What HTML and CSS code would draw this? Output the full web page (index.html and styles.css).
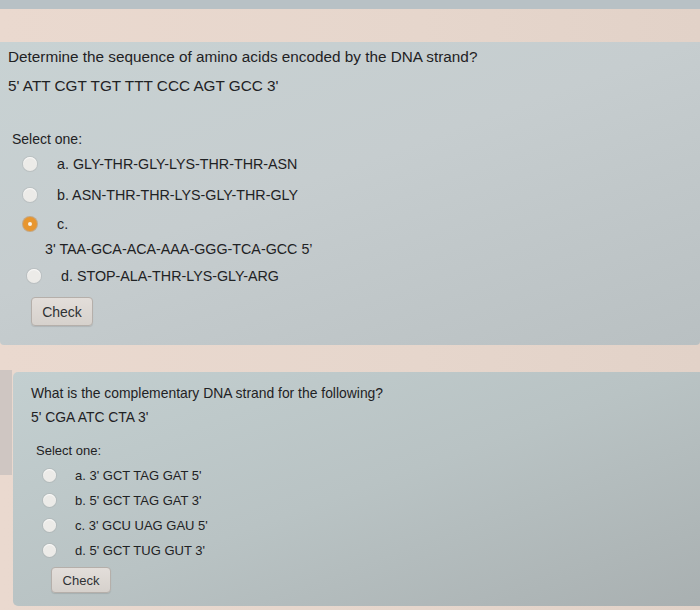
FILE: index.html
```html
<!DOCTYPE html>
<html lang="en">
<head>
    <meta charset="UTF-8">
    <meta name="viewport" content="width=device-width, initial-scale=1.0">
    <title>Quiz</title>
    <link rel="stylesheet" href="styles.css">
</head>
<body>
    <div class="topbar"></div>
    <div class="strip"></div>

    <div class="que first">
        <div class="qtext">
            <p>Determine the sequence of amino acids encoded by the DNA strand?</p>
            <p>5' ATT CGT TGT TTT CCC AGT GCC 3'</p>
        </div>
        <div class="prompt">Select one:</div>
        <div class="answer">
            <label class="opt"><span class="radio"></span><span class="lbl">a. GLY-THR-GLY-LYS-THR-THR-ASN</span></label>
            <label class="opt"><span class="radio"></span><span class="lbl">b. ASN-THR-THR-LYS-GLY-THR-GLY</span></label>
            <label class="opt multi"><span class="radio checked"></span><span class="lbl">c.<span class="wrap">3' TAA-GCA-ACA-AAA-GGG-TCA-GCC 5’</span></span></label>
            <label class="opt last"><span class="radio"></span><span class="lbl">d. STOP-ALA-THR-LYS-GLY-ARG</span></label>
        </div>
        <button class="check">Check</button>
    </div>

    <div class="gap"></div>

    <div class="row">
        <div class="info"></div>
        <div class="que second">
            <div class="qtext">
                <p>What is the complementary DNA strand for the following?</p>
                <p>5' CGA ATC CTA 3'</p>
            </div>
            <div class="prompt">Select one:</div>
            <div class="answer">
                <label class="opt"><span class="radio"></span><span class="lbl">a. 3' GCT TAG GAT 5'</span></label>
                <label class="opt"><span class="radio"></span><span class="lbl">b. 5' GCT TAG GAT 3'</span></label>
                <label class="opt"><span class="radio"></span><span class="lbl">c. 3' GCU UAG GAU 5'</span></label>
                <label class="opt"><span class="radio"></span><span class="lbl">d. 5' GCT TUG GUT 3'</span></label>
            </div>
            <button class="check">Check</button>
        </div>
    </div>
</body>
</html>
```

FILE: styles.css
```css
body {
    margin: 0;
    padding: 0;
    font-family: 'Liberation Sans', Arial, sans-serif;
    color: #1f2224;
    background: linear-gradient(90deg, #ead9cf 0%, #e6d6cc 60%, #e2d2c8 100%);
    height: 610px;
    overflow: hidden;
}

.topbar {
    height: 9px;
    background: #b8c1c5;
}

.strip {
    height: 33px;
}

.que {
    background: linear-gradient(160deg, #c8d2d3 0%, #c6cdcf 45%, #b9c0c2 100%);
}

.que p {
    margin: 0;
}

.first {
    padding: 0 0 19px 8px;
    border-bottom-left-radius: 4px;
    border-bottom-right-radius: 4px;
}

.first .qtext {
    font-size: 15.3px;
    line-height: 29px;
}

.first .prompt {
    font-size: 14px;
    line-height: 24px;
    margin: 27px 0 0 4px;
}

.first .answer {
    margin-top: -3px;
    font-size: 14.3px;
}

.opt {
    display: flex;
    align-items: center;
}

.first .opt {
    height: 31px;
    padding-left: 15px;
}

.first .opt.multi {
    height: auto;
    align-items: flex-start;
}

.first .opt.multi .radio {
    margin-top: 7px;
}

.first .opt.multi .lbl {
    line-height: 28px;
}

.first .opt.multi .wrap {
    display: block;
    line-height: 22px;
    margin-left: -12px;
}

.first .opt.last {
    height: 32px;
    padding-left: 19px;
}

.radio {
    width: 14px;
    height: 14px;
    border-radius: 50%;
    background: #ecebe8;
    box-shadow: 0 0 0 1px rgba(150, 150, 150, 0.25), inset 0 1px 1px rgba(255, 255, 255, 0.8);
    flex-shrink: 0;
    position: relative;
}

.radio.checked {
    background: #e8962f;
    box-shadow: 0 0 0 1px rgba(190, 110, 20, 0.4);
}

.radio.checked::after {
    content: '';
    position: absolute;
    left: 5px;
    top: 5px;
    width: 4px;
    height: 4px;
    border-radius: 50%;
    background: #fbf3e6;
}

.first .lbl {
    margin-left: 20px;
}

.check {
    display: block;
    font-family: 'Liberation Sans', Arial, sans-serif;
    color: #2f3234;
    background: linear-gradient(180deg, #e3deda 0%, #d6d1cc 100%);
    border: 1px solid #b5afaa;
    border-radius: 4px;
    padding: 0;
    box-shadow: 0 1px 1px rgba(0, 0, 0, 0.1);
}

.first .check {
    margin: 5px 0 0 23px;
    width: 62px;
    height: 29px;
    font-size: 14px;
}

.gap {
    height: 27px;
}

.row {
    display: flex;
    align-items: flex-start;
}

.info {
    width: 12px;
    height: 105px;
    margin-top: -2px;
    background: #cfc6c2;
    flex-shrink: 0;
}

.second {
    flex: 1;
    padding: 9px 0 13px 18px;
    border-radius: 5px 0 0 5px;
    margin-left: 1px;
    background: linear-gradient(160deg, #c3cfd0 0%, #b9c3c4 50%, #a9b0b1 100%);
}

.second .qtext {
    font-size: 13.9px;
    line-height: 24px;
}

.second .prompt {
    font-size: 13px;
    line-height: 24px;
    margin: 10px 0 0 5px;
}

.second .opt {
    height: 25px;
    padding-left: 12px;
    font-size: 13px;
}

.second .radio {
    width: 13px;
    height: 13px;
}

.second .lbl {
    margin-left: 19px;
}

.second .check {
    margin: 4px 0 0 20px;
    width: 60px;
    height: 26px;
    font-size: 13px;
}
```
